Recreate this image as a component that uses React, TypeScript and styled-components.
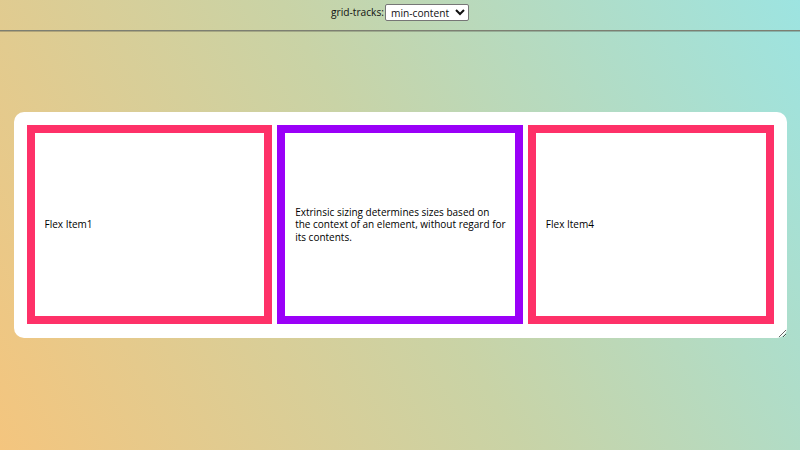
import React, { useState } from "react";
import styled, { createGlobalStyle } from "styled-components";

const Global = createGlobalStyle`
  html, body { margin: 0; padding: 0; height: 100%; }
  body {
    font-family: "Open Sans", "Liberation Sans", sans-serif;
    background: linear-gradient(62deg, #f4c57e 0%, #c9d3a6 50%, #9de4e1 100%);
    min-height: 450px;
  }
  #root { height: 100%; }
`;

const Page = styled.div`
  display: flex;
  flex-direction: column;
  height: 450px;
`;

const Header = styled.header`
  height: 31px;
  box-sizing: border-box;
  padding-top: 4px;
  display: flex;
  justify-content: center;
  align-items: flex-start;
  font-size: 10.2px;
  color: #111;
  border-bottom: 1px solid #7d7f72;
  box-shadow: 0 1px 0 rgba(90, 90, 80, 0.35);
`;

const Label = styled.label`
  line-height: 17px;
  display: flex;
  align-items: center;
`;

const Select = styled.select`
  font-family: "Open Sans", "Liberation Sans", sans-serif;
  font-size: 10.2px;
  height: 17px;
  padding: 0 0 0 1px;
  margin: 0 0 0 1px;
  border: 1px solid #767676;
  border-radius: 2px;
  background: #fff;
  color: #111;
`;

const Main = styled.main`
  flex: 1;
  display: flex;
  align-items: center;
  justify-content: center;
  padding-bottom: 31px;
`;

const Container = styled.div`
  width: 773px;
  box-sizing: border-box;
  padding: 13px 13px 14px 13px;
  background: #fff;
  border-radius: 10px;
  display: grid;
  grid-template-columns: repeat(3, 1fr);
  gap: 5px;
  resize: both;
  overflow: auto;
`;

const Item = styled.div<{ $color: string }>`
  height: 199px;
  box-sizing: border-box;
  border: 8px solid ${(p) => p.$color};
  padding: 0 8px 0 10px;
  display: flex;
  align-items: center;
  font-size: 10px;
  line-height: 12.6px;
  color: #000;
  background: #fff;
`;

export default function App() {
  const [v, setV] = useState("min-content");
  return (
    <>
      <Global />
      <Page>
        <Header>
          <Label>
            grid-tracks:
            <Select value={v} onChange={(e) => setV(e.target.value)}>
              <option value="min-content">min-content</option>
              <option value="max-content">max-content</option>
              <option value="auto">auto</option>
            </Select>
          </Label>
        </Header>
        <Main>
          <Container>
            <Item $color="#fe3168">Flex Item1</Item>
            <Item $color="#9a00f8">
              Extrinsic sizing determines sizes based on the context of an element, without regard for its contents.
            </Item>
            <Item $color="#fe3168">Flex Item4</Item>
          </Container>
        </Main>
      </Page>
    </>
  );
}
